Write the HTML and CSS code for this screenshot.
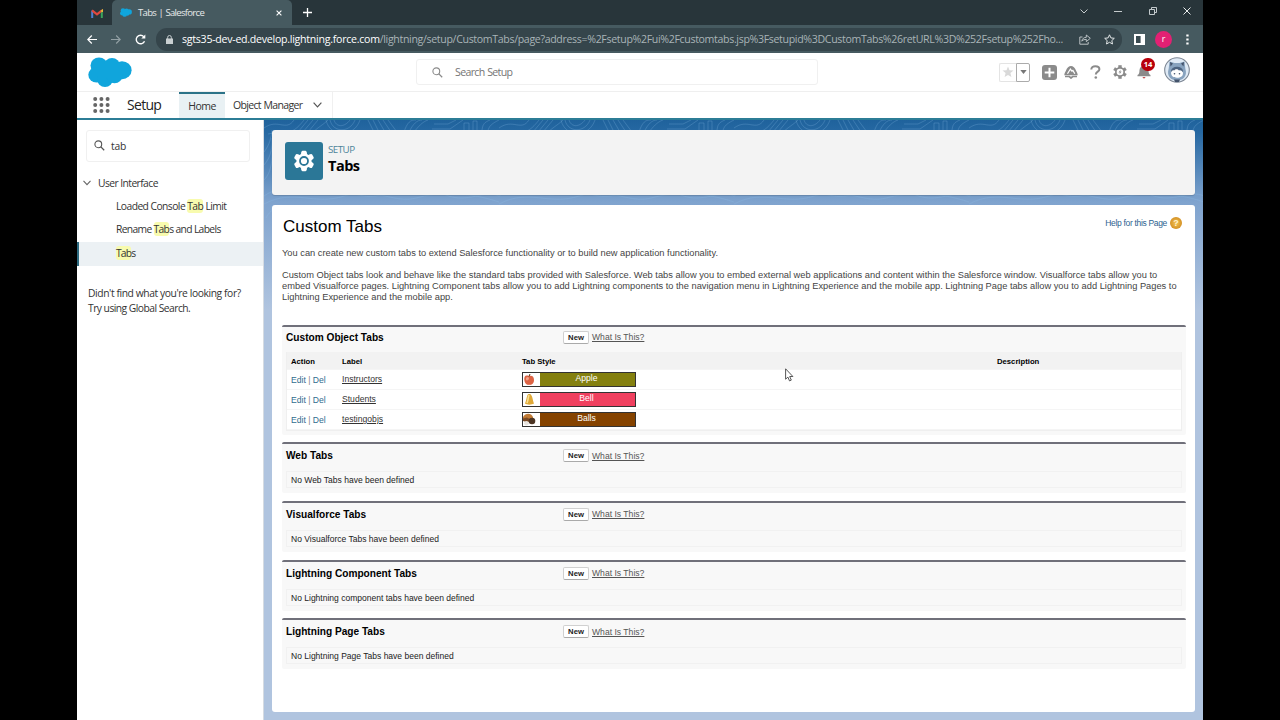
FILE: index.html
```html
<!DOCTYPE html>
<html lang="en">
<head>
<meta charset="utf-8">
<title>Tabs | Salesforce</title>
<link rel="stylesheet" href="styles.css">
</head>
<body>
<div class="screen">
  <div class="tabstrip">
    <div class="pinned">
      <svg width="12" height="9" viewBox="0 0 12 9"><path d="M1.2 9V1.5" stroke="#4d7fd0" stroke-width="2"/><path d="M10.8 9V1.5" stroke="#3ba55c" stroke-width="2"/><path d="M1 1.3l5 4 5-4" fill="none" stroke="#e0483e" stroke-width="2.2"/><path d="M10 2.5L11.6 1v2" stroke="#e9b93a" stroke-width="1.4"/></svg>
    </div>
    <div class="active-tab">
      <svg class="fav" width="12" height="9" viewBox="0 0 44 32"><use href="#cloud"/></svg>
      <span class="tab-title">Tabs | Salesforce</span>
      <svg class="tab-x" width="6" height="6" viewBox="0 0 6 6"><path d="M.6.6l4.8 4.8M5.4.6L.6 5.4" stroke="#fff" stroke-width="1.1"/></svg>
    </div>
    <svg class="plus" width="9" height="9" viewBox="0 0 9 9"><path d="M4.500 0v9M0 4.500h9" stroke="#fff" stroke-width="1.300"/></svg>
    <div class="wincontrols">
      <svg width="8" height="5" viewBox="0 0 8 5"><path d="M.5.5L4 4 7.500.5" fill="none" stroke="#c5cbcd"/></svg>
      <svg width="8" height="5" viewBox="0 0 8 5"><path d="M0 2.500h8" stroke="#c5cbcd"/></svg>
      <svg width="8" height="8" viewBox="0 0 8 8"><path d="M.5 2.500h5v5h-5zM2.500 2V.5h5v5H6" fill="none" stroke="#d5dadc" stroke-width=".9"/></svg>
      <svg width="8" height="8" viewBox="0 0 8 8"><path d="M.5.5l7 7M7.500.5l-7 7" stroke="#e8ebec"/></svg>
    </div>
  </div>

  <div class="toolbar">
    <svg class="back" width="10" height="9" viewBox="0 0 10 9"><path d="M10 4.500H1M4.800.5l-4 4 4 4" fill="none" stroke="#fff" stroke-width="1.200"/></svg>
    <svg class="fwd" width="10" height="9" viewBox="0 0 10 9"><path d="M0 4.500h9M5.200.5l4 4-4 4" fill="none" stroke="#93a0a4" stroke-width="1.100"/></svg>
    <svg class="reload" width="11" height="11" viewBox="0 0 11 11"><path d="M9.500 7.200A4.300 4.300 0 1 1 8.800 2.700" fill="none" stroke="#fff" stroke-width="1.400"/><path d="M10.300.5v4H6.300z" fill="#fff"/></svg>
    <div class="omnibox">
      <svg width="7" height="9" viewBox="0 0 7 9"><path d="M0 3.500h7V9H0z" fill="#c9cfd1"/><path d="M1.700 4V2.300a1.800 1.800 0 0 1 3.600 0V4" fill="none" stroke="#c9cfd1"/></svg>
      <span class="url"><span class="host">sgts35-dev-ed.develop.lightning.force.com</span><span class="path">/lightning/setup/CustomTabs/page?address=%2Fsetup%2Fui%2Fcustomtabs.jsp%3Fsetupid%3DCustomTabs%26retURL%3D%252Fsetup%252Fho...</span></span>
      <svg class="share" width="12" height="11" viewBox="0 0 12 11"><path d="M3.500 3H.8v7.200h8.400V8" fill="none" stroke="#c9cfd1" stroke-width=".9"/><path d="M2.800 7.200C3.200 4.500 5 3.400 7.300 3.300V1l4 3.300-4 3.300V5.400C5.300 5.400 4 5.800 2.800 7.200z" fill="none" stroke="#c9cfd1" stroke-width=".9"/></svg>
      <svg class="star" width="11" height="11" viewBox="0 0 11 11"><path d="M5.500.8l1.400 3.100 3.400.4-2.500 2.300.7 3.400-3-1.700-3 1.700.7-3.400L.7 4.300l3.400-.4z" fill="none" stroke="#e3e7e8"/></svg>
    </div>
    <svg class="panel" width="11" height="11" viewBox="0 0 11 11"><path d="M0 0h11v11H0z" fill="#fff"/><path d="M2 2h4.600v7H2z" fill="#3a4b51"/></svg>
    <span class="avatar">r</span>
    <svg class="kebab" width="3" height="11" viewBox="0 0 3 11"><path d="M.3.500h2.300v2H.3zM.3 4.500h2.300v2H.3zM.3 8.500h2.300v2H.3z" fill="#fff"/></svg>
  </div>

  <div class="header">
    <svg class="logo" width="44" height="30" viewBox="0 0 44 32" preserveAspectRatio="none"><g id="cloud" fill="#10a5dc"><circle cx="11" cy="9" r="8.500"/><circle cx="24" cy="9" r="8"/><circle cx="34" cy="14" r="9.600"/><circle cx="8.500" cy="19" r="8.200"/><circle cx="17" cy="24" r="8"/><circle cx="26.500" cy="20" r="8"/><path d="M10 8h24v14H10z"/></g></svg>
    <div class="search">
      <svg width="11" height="11" viewBox="0 0 11 11"><circle cx="4.300" cy="4.300" r="3.400" fill="none" stroke="#8a8a8a" stroke-width="1.100"/><path d="M6.900 6.900l3.300 3.300" stroke="#8a8a8a" stroke-width="1.300"/></svg>
      <span>Search Setup</span>
    </div>
    <div class="fav-group">
      <div class="fav-star"><svg width="12" height="12" viewBox="0 0 12 12"><path d="M6 .5l1.500 3.800 4 .2-3.100 2.600 1 4L6 8.900 2.600 11.100l1-4L.5 4.500l4-.2z" fill="#d9d9d9"/></svg></div>
      <div class="fav-drop"><svg width="7" height="4" viewBox="0 0 8 5"><path d="M0 0h8L4 5z" fill="#777"/></svg></div>
    </div>
    <div class="actions">
      <svg width="15" height="15" viewBox="0 0 15 15"><rect width="15" height="15" rx="3" fill="#8b8b8b"/><path d="M7.500 2.700v9.600M2.700 7.500h9.600" stroke="#fff" stroke-width="2"/></svg>
      <svg width="14" height="14" viewBox="0 0 14 14"><path d="M.3 10.300C.3 8 1.300 7.300 1.900 5.700 2.900 3 5 1 7 1s4.100 2 5.100 4.700c.6 1.600 1.600 2.300 1.600 4.600z" fill="#8b8b8b"/><path d="M3.500 8.800L6.400 4l1.500 2.200 1-.8 1.900 3.400" fill="none" stroke="#fff" stroke-width="1.200"/><path d="M1 11.500h4.300l1.700 1.500 1.700-1.500H13" fill="none" stroke="#8b8b8b" stroke-width="1.700"/></svg>
      <svg width="11" height="14" viewBox="0 0 11 14"><path d="M1.300 4.500C1.300 2.300 3 1.200 5.300 1.200S9.400 2.400 9.400 4.300C9.400 6.800 5.800 6.600 5.800 9.600" fill="none" stroke="#8b8b8b" stroke-width="2"/><circle cx="5.800" cy="12.500" r="1.300" fill="#8b8b8b"/></svg>
      <svg width="14" height="14" viewBox="-7 -7 14 14"><g fill="#8b8b8b"><circle r="5"/><path id="tooth" d="M-1.700-6.800h3.400v3h-3.400z"/><use href="#tooth" transform="rotate(60)"/><use href="#tooth" transform="rotate(120)"/><use href="#tooth" transform="rotate(180)"/><use href="#tooth" transform="rotate(240)"/><use href="#tooth" transform="rotate(300)"/></g><circle r="3.300" fill="#fff"/><path d="M.7-2.500L-1.500.4H0L-.6 2.500 1.600-.4H.1z" fill="#8b8b8b"/></svg>
      <div class="bell">
        <svg width="14" height="14" viewBox="0 0 14 14"><path d="M.5 11.200V10C2.500 9 2.300 7.500 2.500 5 2.700 2.500 4.500 1 7 1s4.300 1.500 4.500 4c.2 2.500 0 4 2 5v1.200z" fill="#8b8b8b"/><path d="M5.300 12h3.400L7 13.700z" fill="#c05050"/></svg>
        <span class="badge">14</span>
      </div>
      <svg class="astro" width="26" height="26" viewBox="0 0 26 26"><circle cx="13" cy="13" r="12.300" fill="#dfeaf5" stroke="#7d8794" stroke-width="1.100"/><path d="M5.500 4.500l5 1.500h5l5-1.500.8 7C24 20 18 23.500 13 23.500S2 20 4.700 11.500z" fill="#88a3bf"/><path d="M6 5l3 1.500-2.500 3zM20 5l-3 1.500 2.500 3z" fill="#43536b"/><ellipse cx="13" cy="14.500" rx="6" ry="4.800" fill="#4c6380"/><path d="M7 15.500c1-2 1.800-2.700 3.200-2 1-1.700 3.600-1.700 4.800 0 1.500-.7 2.800.2 4 2 .2 4-2.500 5.200-6 5.200S7 19 7 15.500z" fill="#fff"/><circle cx="10.500" cy="16.800" r=".8" fill="#43536b"/><circle cx="15.500" cy="16.800" r=".8" fill="#43536b"/><path d="M10 22.500h6l-1 2.500h-4z" fill="#43536b"/></svg>
    </div>
  </div>

  <div class="nav">
    <svg class="waffle" width="17" height="16" viewBox="0 0 17 16"><g fill="#666"><circle cx="2.200" cy="2" r="2"/><circle cx="8.400" cy="2" r="2"/><circle cx="14.600" cy="2" r="2"/><circle cx="2.200" cy="8" r="2"/><circle cx="8.400" cy="8" r="2"/><circle cx="14.600" cy="8" r="2"/><circle cx="2.200" cy="14" r="2"/><circle cx="8.400" cy="14" r="2"/><circle cx="14.600" cy="14" r="2"/></g></svg>
    <span class="app-name">Setup</span>
    <div class="nav-home">Home</div>
    <div class="nav-object"><span>Object Manager</span><svg width="9" height="6" viewBox="0 0 9 6"><path d="M.6.700L4.500 4.800 8.400.7" fill="none" stroke="#555" stroke-width="1.200"/></svg></div>
  </div>

  <div class="content">
    <div class="sidebar">
      <div class="quickfind">
        <svg width="11" height="11" viewBox="0 0 11 11"><circle cx="4.300" cy="4.300" r="3.400" fill="none" stroke="#555" stroke-width="1.100"/><path d="M6.900 6.900l3.300 3.300" stroke="#555" stroke-width="1.300"/></svg>
        <span>tab</span>
      </div>
      <div class="tree-head"><svg width="8" height="6" viewBox="0 0 8 6"><path d="M.5.800L4 4.600 7.500.8" fill="none" stroke="#666" stroke-width="1.100"/></svg><span class="t-ui">User Interface</span></div>
      <div class="tree-item"><span class="t-console">Loaded Console <mark>Tab</mark> Limit</span></div>
      <div class="tree-item"><span class="t-rename">Rename <mark>Tab</mark>s and Labels</span></div>
      <div class="tree-item selected"><span class="t-tabs"><mark>Tab</mark>s</span></div>
      <p class="hint"><span class="hint-a">Didn't find what you're looking for?</span><br><span class="hint-b">Try using Global Search.</span></p>
    </div>

    <div class="main">
      <svg class="topo" width="939" height="150" viewBox="0 0 939 150">
        <defs><pattern id="waves" width="235" height="150" patternUnits="userSpaceOnUse"><g fill="none" stroke="#8fc0ec" stroke-opacity=".3" stroke-width=".8"><path d="M0 8c14-10 22 4 30-8M4 14c18-4 22 4 36-14M34 12l10-12M39 12l10-12M44 12l10-12M49 12C56 6 60 4 64 0M70 0c2 7 10 8 16 0M66 0c3 13 20 13 25 0M62 0c4 18 28 18 34 0M104 0l6 12M109 0l6 12M114 0l7 12M119 0l8 12M124 0l9 12M140 12c4-12 8-12 12-12M145 12c4-8 8-12 13-12M150 12c4-5 8-10 14-12M170 4h14l8-4M168 9h18l13-9M200 12V3h5v9M209 12V1h4v11M218 12c0-8 3-10 8-12M224 12c0-6 5-9 11-12"/><path d="M0 32c6-8 7-14 8-22M0 45C8 36 8 26 8 18M0 60c8-8 8-20 8-30M0 76c22-16 42 5 62-3s32 8 54 2 44-9 66 0 38-6 53 1M0 84c30-16 50 2 80-8s50 8 72 2 50-7 83 4M2 98C6 90 8 94 8 86"/></g></pattern></defs>
        <rect width="939" height="150" fill="url(#waves)"/>
      </svg>
      <div class="page-head">
        <div class="gear-tile"><svg width="22" height="22" viewBox="-11 -11 22 22"><g fill="#fff"><circle r="7.600"/><path id="tooth2" d="M-2.800-8.500Q-2.500-10.300-1.500-10.300H1.500Q2.500-10.300 2.800-8.500L3.300-5h-6.600z"/><use href="#tooth2" transform="rotate(60)"/><use href="#tooth2" transform="rotate(120)"/><use href="#tooth2" transform="rotate(180)"/><use href="#tooth2" transform="rotate(240)"/><use href="#tooth2" transform="rotate(300)"/></g><circle r="4" fill="#fff" stroke="#2b7797" stroke-width="1.800"/></svg></div>
        <div class="head-text"><div class="eyebrow">SETUP</div><div class="head-title">Tabs</div></div>
      </div>

      <div class="page-body">
        <div class="title-row">
          <h1>Custom Tabs</h1>
          <div class="help"><span>Help for this Page</span><span class="help-icon">?</span></div>
        </div>
        <p class="intro">You can create new custom tabs to extend Salesforce functionality or to build new application functionality.</p>
        <p class="intro second">Custom Object tabs look and behave like the standard tabs provided with Salesforce. Web tabs allow you to embed external web applications and content within the Salesforce window. Visualforce tabs allow you to<br>embed Visualforce pages. Lightning Component tabs allow you to add Lightning components to the navigation menu in Lightning Experience and the mobile app. Lightning Page tabs allow you to add Lightning Pages to<br>Lightning Experience and the mobile app.</p>

        <div class="block objects">
          <div class="block-head"><h2>Custom Object Tabs</h2><span class="btn">New</span><span class="what">What Is This?</span></div>
          <div class="grid">
            <div class="row head"><span>Action</span><span>Label</span><span>Tab Style</span><span>Description</span></div>
            <div class="row"><span class="act">Edit <i>|</i> Del</span><span class="lbl">Instructors</span>
              <span class="style-chip apple"><svg width="17" height="13" viewBox="0 0 17 13"><path d="M6 3C2 1.500 1 4 1.300 7c.4 3.500 2.500 5.500 4.700 4.800C9 12.500 11 10 11 7c0-3.500-2-5-5-4z" fill="#dd6344"/><path d="M3 5c1-1.500 3-1 3 .5S4 8 3 7z" fill="#f2a187"/><path d="M6 3.500L7 1" stroke="#5b3a1c"/></svg><b>Apple</b></span></div>
            <div class="row"><span class="act">Edit <i>|</i> Del</span><span class="lbl">Students</span>
              <span class="style-chip bell-chip"><svg width="17" height="13" viewBox="0 0 17 13"><path d="M5.500 1C3.500 2 4 6 2 10.500c2 1.500 6.500 1.500 9 0C9.500 7 9.500 2 7 1z" fill="#dfa838"/><path d="M6 2C5 4 5.500 7 4 10" stroke="#f8e08e" stroke-width="1.600" fill="none"/></svg><b>Bell</b></span></div>
            <div class="row"><span class="act">Edit <i>|</i> Del</span><span class="lbl">testingobjs</span>
              <span class="style-chip balls"><svg width="17" height="13" viewBox="0 0 17 13"><path d="M0 4C2 1 5 0 8 1.500c2 1.500 2.500 3.500 2 5L5 9 0 6.500z" fill="#c17a34"/><path d="M0 5.500l4-1 3.500 2L5 9.500 0 8z" fill="#7a4a24"/><circle cx="9" cy="8" r="3.300" fill="#4d3524"/><circle cx="3.500" cy="10.300" r="2.300" fill="#e8e4de"/></svg><b>Balls</b></span></div>
          </div>
        </div>
        <div class="block simple"><div class="block-head"><h2>Web Tabs</h2><span class="btn">New</span><span class="what">What Is This?</span></div><div class="empty">No Web Tabs have been defined</div></div>
        <div class="block simple"><div class="block-head"><h2>Visualforce Tabs</h2><span class="btn">New</span><span class="what">What Is This?</span></div><div class="empty">No Visualforce Tabs have been defined</div></div>
        <div class="block simple"><div class="block-head"><h2>Lightning Component Tabs</h2><span class="btn">New</span><span class="what">What Is This?</span></div><div class="empty">No Lightning component tabs have been defined</div></div>
        <div class="block simple"><div class="block-head"><h2>Lightning Page Tabs</h2><span class="btn">New</span><span class="what">What Is This?</span></div><div class="empty">No Lightning Page Tabs have been defined</div></div>
      </div>
    </div>
  </div>
  <svg class="cursor" width="9" height="14" viewBox="0 0 9 14"><path d="M.6.8v10.400l2.300-2.100 1.600 3.800 1.800-.8-1.600-3.600h3.200z" fill="#fff" stroke="#444" stroke-width=".9"/></svg>
</div>
</body>
</html>
```
FILE: styles.css
```css
* { box-sizing: border-box; }
body { margin: 0; background: #000; font-family: "Open Sans", "Noto Sans", sans-serif; color: #222; }
svg { display: block; flex: none; }
.screen { position: relative; width: 1126px; height: 720px; margin-left: 77px; background: #fff; overflow: hidden; display: flex; flex-direction: column; white-space: nowrap; }

/* browser chrome */
.tabstrip { height: 25px; flex: none; background: #28353a; display: flex; align-items: center; }
.pinned { width: 35px; height: 25px; display: flex; align-items: center; justify-content: center; padding-left: 4px; padding-top: 1px; }
.active-tab { width: 180px; height: 25px; background: #465a60; border-radius: 5px 5px 0 0; display: flex; align-items: center; padding: 0 10px 0 8px; color: #e6eaeb; font-size: 9.500px; }
.tab-title { margin-left: 6px; letter-spacing: -.68px; word-spacing: .6px; }
.tab-x { margin-left: auto; }
.plus { margin-left: 11px; }
.wincontrols { margin-left: auto; display: flex; align-items: center; gap: 26.500px; padding-right: 12px; margin-top: -3px; }
.toolbar { height: 28px; flex: none; background: #465a60; display: flex; align-items: center; padding-left: 10px; }
.fwd { margin-left: 14px; }
.reload { margin-left: 14px; }
.omnibox { width: 966px; height: 23px; flex: none; border-radius: 11px; background: #35454b; margin-left: 10px; display: flex; align-items: center; padding: 0 7px 0 10px; }
.url { margin-left: 9px; font-size: 10.600px; color: #a9b4b7; }
.host { color: #fff; letter-spacing: -.26px; }
.path { letter-spacing: -.34px; }
.share { margin-left: auto; }
.star { margin-left: 13px; }
.panel { margin-left: 12px; }
.avatar { width: 17px; height: 17px; border-radius: 50%; background: #e32073; color: #fff; font-size: 9px; line-height: 16px; text-align: center; margin-left: 10px; }
.kebab { margin-left: 14px; }

/* global header */
.header { height: 39px; flex: none; border-bottom: 1px solid #efefef; display: flex; align-items: center; padding-left: 11px; }
.search { width: 402px; height: 26px; margin-left: 284px; border: 1px solid #f0f0f0; border-radius: 3px; display: flex; align-items: center; padding-left: 15px; font-size: 10.600px; color: #757575; }
.search span { margin-left: 12px; letter-spacing: -.66px; word-spacing: .5px; }
.fav-group { display: flex; margin-left: 181px; }
.fav-star, .fav-drop { height: 19px; display: flex; align-items: center; justify-content: center; }
.fav-star { width: 17px; border: 1px solid #e4e4e4; border-right: 0; border-radius: 2px 0 0 2px; }
.fav-drop { width: 14px; border: 1px solid #ababab; border-radius: 0 2px 2px 0; }
.actions { display: flex; align-items: center; margin-left: 12px; }
.actions > :nth-child(2) { margin-left: 7px; }
.actions > :nth-child(3) { margin-left: 12px; }
.actions > :nth-child(4) { margin-left: 12px; }
.actions > :nth-child(5) { margin-left: 10px; }
.actions > :nth-child(6) { margin-left: 13px; margin-top: -4px; }
.bell { position: relative; }
.badge { position: absolute; left: 4px; top: -7px; width: 14px; height: 13px; border-radius: 7px; background: #b8000c; color: #fff; font: bold 7.500px/13px "Open Sans", sans-serif; text-align: center; }

/* app navigation */
.nav { height: 27.500px; flex: none; border-bottom: 2px solid #2c7d96; display: flex; align-items: center; padding-left: 16px; font-size: 10.500px; color: #333; }
.app-name { margin-left: 17px; font-size: 14px; width: 52px; letter-spacing: -.7px; color: #222; }
.nav-home { width: 46px; height: 26px; background: #e9f1f4; border-top: 2px solid #2c7388; line-height: 25px; text-align: center; letter-spacing: -.5px; }
.nav-object { height: 26px; width: 108px; display: flex; align-items: center; justify-content: space-between; padding: 0 10px 0 8px; border-right: 1px solid #f0f0f0; letter-spacing: -.66px; word-spacing: .5px; }

/* sidebar */
.content { flex: 1; display: flex; min-height: 0; }
.sidebar { width: 187px; flex: none; padding-top: 10px; border-right: 1px solid #d5dbe2; font-size: 10.300px; color: #333; }
.quickfind { margin-left: 9px; width: 164px; height: 32px; border: 1px solid #f0f0f0; border-radius: 3px; display: flex; align-items: center; padding-left: 7px; }
.quickfind span { margin-left: 6px; letter-spacing: -.2px; }
.tree-head { display: flex; align-items: center; height: 24px; margin-top: 9px; padding-left: 6px; }
.tree-head span { margin-left: 7px; }
.tree-item { height: 23.700px; line-height: 23px; padding-left: 39px; }
.selected { background: #ecf1f4; border-left: 2px solid #2c6a80; padding-left: 37px; }
.t-ui { letter-spacing: -.57px; }
.t-console { letter-spacing: -.55px; }
.t-rename { letter-spacing: -.66px; }
.t-tabs { letter-spacing: -.8px; }
mark { background: #f8fbae; color: inherit; border-radius: 3px; }
.hint { margin: 20px 0 0 11px; line-height: 15px; }
.hint-a { letter-spacing: -.41px; }
.hint-b { letter-spacing: -.53px; }

/* main area */
.main { flex: 1; min-width: 0; position: relative; background: linear-gradient(#1f629c 0, #2668a2 12px, #7fa3ce 82px, #b0c4df 190px); padding: 10px 8px 8px; }
.topo { position: absolute; left: 0; top: 0; }
.page-head { position: relative; height: 65px; background: #f3f3f3; border-radius: 3px; display: flex; padding: 12px 0 0 13px; box-shadow: 0 1px 1px rgba(0, 0, 0, .15); }
.gear-tile { width: 38px; height: 38px; border-radius: 3px; background: #2b7797; display: flex; align-items: center; justify-content: center; }
.head-text { margin-left: 5px; }
.eyebrow { font-size: 9.800px; line-height: 14px; margin-top: 1px; color: #4d8399; letter-spacing: -.55px; }
.head-title { font-size: 14.500px; font-weight: 700; line-height: 18px; color: #000; letter-spacing: -.5px; }
.page-body { position: relative; margin-top: 10px; height: 507px; background: #fff; border-radius: 3px; padding: 10px 10px 0; font-family: "Liberation Sans", Arial, sans-serif; }
.title-row { display: flex; justify-content: space-between; height: 24px; }
h1 { margin: 0 0 0 1px; font-size: 17px; font-weight: 400; line-height: 24px; color: #000; }
.help { display: flex; align-items: center; font-size: 8.500px; color: #2d5f8f; padding: 0 3px 8px 0; }
.help span:first-child { letter-spacing: -.32px; }
.help-icon { width: 12px; height: 12px; margin-left: 3px; border-radius: 50%; background: radial-gradient(#f3c457, #c87d10); color: #fff3cf; font: bold 9px/12px "Liberation Sans", sans-serif; text-align: center; }
.intro { margin: 9px 0 0; font-size: 9.290px; line-height: 11px; color: #444; }
.second { margin-top: 11px; }

/* list blocks */
.block { width: 904px; border-top: 2px solid #70707a; border-radius: 2px; background: #f8f8f8; padding: 0 4px; }
.objects { margin-top: 22px; height: 110px; }
.simple { margin-top: 7.700px; height: 51px; }
.block-head { height: 25px; padding-bottom: 4px; display: flex; align-items: center; }
h2 { width: 277px; margin: 0; font-size: 10.150px; color: #000; }
.btn { width: 26px; height: 13px; border: 1px solid #d0d0d0; border-bottom-color: #aaa; border-radius: 2px; background: #fff; font-size: 7.700px; font-weight: 700; line-height: 12px; text-align: center; color: #222; }
.what { margin-left: 3px; font-size: 8.600px; color: #555; text-decoration: underline; }
.grid { background: #fff; border: solid #efefef; border-width: 0 1px 1px; }
.row { display: grid; grid-template-columns: 51px 180px 475px auto; align-items: center; height: 20px; padding-left: 4px; border-bottom: 1px solid #f5f5f5; font-size: 8.600px; }
.row.head { height: 18px; padding-top: 2px; background: #f2f2f2; font-size: 7.700px; font-weight: 700; color: #000; }
.act { color: #2f6c8e; padding-top: 2px; }
.act i { font-style: normal; color: #888; }
.lbl { text-decoration: underline; color: #333; }
.style-chip { width: 114px; height: 15px; border: 1px solid #333; display: flex; color: #fff; }
.style-chip svg { background: #fff; }
.style-chip b { flex: 1; font-weight: 400; line-height: 11px; text-align: center; padding-right: 2px; }
.apple { background: #84800f; }
.bell-chip { background: #f0405f; }
.balls { background: #854300; }
.simple .block-head { height: 27px; padding-bottom: 4px; }
.empty { height: 17px; border: 1px solid #f1f1f1; line-height: 16px; padding-left: 4px; font-size: 8.530px; color: #222; }
.cursor { position: absolute; left: 707.500px; top: 367.500px; }
```
